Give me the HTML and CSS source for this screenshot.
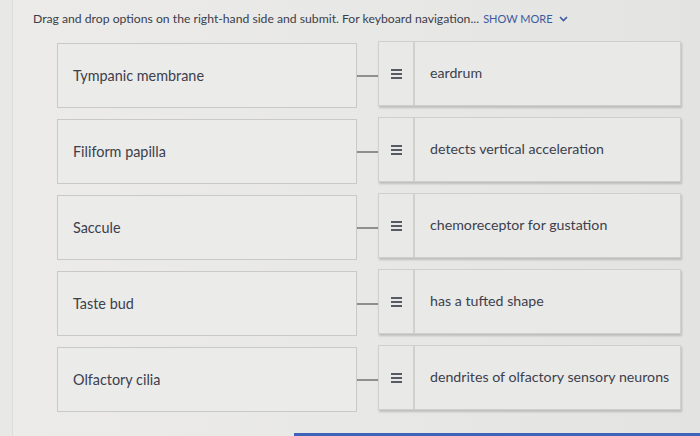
FILE: index.html
```html
<!DOCTYPE html>
<html>
<head>
<meta charset="utf-8">
<link rel="stylesheet" href="styles.css">
</head>
<body>
<div class="page">
  <p class="intro">Drag and drop options on the right-hand side and submit. For keyboard navigation... <span class="more">SHOW MORE<svg class="chev" width="9" height="6" viewBox="0 0 9 6"><path d="M1 1 L4.5 4.5 L8 1" fill="none" stroke="#3b5aa0" stroke-width="1.6"/></svg></span></p>
  <div class="rows">
    <div class="row">
      <div class="term">Tympanic membrane</div>
      <div class="link"></div>
      <div class="option"><div class="handle"><span></span><span></span><span></span></div><div class="label">eardrum</div></div>
    </div>
    <div class="row">
      <div class="term">Filiform papilla</div>
      <div class="link"></div>
      <div class="option"><div class="handle"><span></span><span></span><span></span></div><div class="label">detects vertical acceleration</div></div>
    </div>
    <div class="row">
      <div class="term">Saccule</div>
      <div class="link"></div>
      <div class="option"><div class="handle"><span></span><span></span><span></span></div><div class="label">chemoreceptor for gustation</div></div>
    </div>
    <div class="row">
      <div class="term">Taste bud</div>
      <div class="link"></div>
      <div class="option"><div class="handle"><span></span><span></span><span></span></div><div class="label">has a tufted shape</div></div>
    </div>
    <div class="row">
      <div class="term">Olfactory cilia</div>
      <div class="link"></div>
      <div class="option"><div class="handle"><span></span><span></span><span></span></div><div class="label">dendrites of olfactory sensory neurons</div></div>
    </div>
  </div>
  <div class="bottom-bar"></div>
</div>
</body>
</html>
```

FILE: styles.css
```css
html, body {
  margin: 0;
  padding: 0;
}
body {
  background: #e8e8e6;
  font-family: Lato, "Open Sans", sans-serif;
  color: #3b3f4b;
  width: 700px;
  height: 436px;
  overflow: hidden;
}
.page {
  position: relative;
  height: 436px;
  border-left: 1px solid #dcdcda;
  margin-left: 12px;
  background: linear-gradient(90deg, #ecebe9 0%, #e8e8e6 50%, #e3e3e1 100%);
}
.intro {
  margin: 0;
  padding: 11px 0 0 20px;
  font-size: 12.2px;
  line-height: 16px;
  color: #3a3e4a;
  white-space: nowrap;
}
.more {
  color: #3b5aa0;
  font-size: 11px;
  margin-left: 1px;
}
.chev {
  margin-left: 6px;
  vertical-align: 1px;
}
.rows {
  display: flex;
  flex-direction: column;
  gap: 11px;
  padding: 16px 0 0 44px;
}
.row {
  display: flex;
  align-items: center;
  height: 65px;
}
.term {
  box-sizing: border-box;
  width: 300px;
  height: 65px;
  border: 1px solid #c9c9c7;
  background: #ebebe9;
  display: flex;
  align-items: center;
  padding-left: 15px;
  font-size: 14.4px;
  color: #3c404c;
}
.link {
  width: 21px;
  height: 2px;
  background: #8f8f8f;
}
.option {
  box-sizing: border-box;
  width: 303px;
  height: 65px;
  margin-bottom: 4px;
  border: 1px solid #cfcfcd;
  background: #e9e9e7;
  box-shadow: 1px 2px 2px rgba(0, 0, 0, 0.18);
  display: flex;
}
.handle {
  width: 34px;
  border-right: 2px solid #d0d0ce;
  display: flex;
  flex-direction: column;
  align-items: center;
  justify-content: center;
  gap: 2px;
}
.handle span {
  display: block;
  width: 11px;
  height: 2px;
  background: #555a63;
}
.label {
  display: flex;
  align-items: center;
  padding-left: 15px;
  font-size: 14.2px;
  color: #3c404c;
  padding-bottom: 2px;
}
.bottom-bar {
  position: absolute;
  left: 281px;
  right: 0;
  bottom: 0;
  height: 3px;
  background: #3d64b8;
}
```
